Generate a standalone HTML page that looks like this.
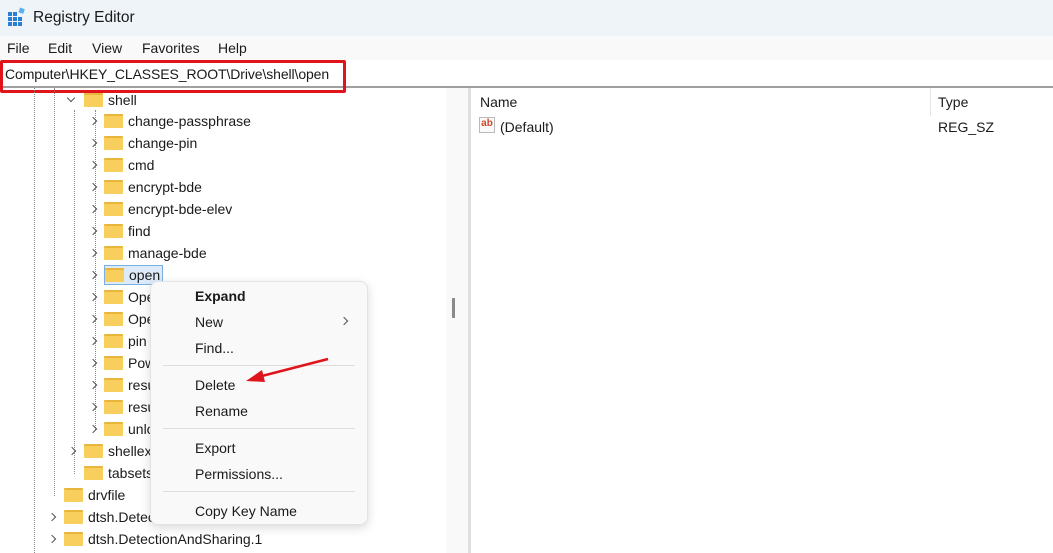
<!DOCTYPE html>
<html><head><style>
body{margin:0;width:1053px;height:553px;overflow:hidden;background:#fff;font-family:"Liberation Sans",sans-serif;font-size:14px;color:#1a1a1a;position:relative}
.a{position:absolute;white-space:nowrap}
.row{position:absolute;height:22px;line-height:22px;white-space:nowrap}
.fd{display:inline-block;width:19px;height:14px;background:#f8cf5c;border-radius:1px;vertical-align:-2px;margin-right:5px;position:relative;border-top:2px solid #e9b63c;box-sizing:border-box}
.ch{position:absolute;width:5px;height:5px;border-right:1.3px solid #555;border-bottom:1.3px solid #555;transform:rotate(-45deg)}
.dv{position:absolute;border-left:1px dotted #888}
.mi{position:absolute;left:44px;font-size:14px}
.sep{position:absolute;left:12px;right:12px;height:1px;background:#ddd}
</style></head><body>
<div class="a" style="left:0;top:0;width:1053px;height:36px;background:#eff4f9"></div>
<svg class="a" style="left:7px;top:7px" width="20" height="20" viewBox="0 0 20 20"><g fill="#2a7fd4"><rect x="1" y="5" width="4" height="4"/><rect x="6" y="5" width="4" height="4"/><rect x="1" y="10" width="4" height="4"/><rect x="6" y="10" width="4" height="4"/><rect x="11" y="10" width="4" height="4"/><rect x="1" y="15" width="4" height="4"/><rect x="6" y="15" width="4" height="4"/><rect x="11" y="15" width="4" height="4"/></g><rect x="12" y="1" width="5" height="5" fill="#5ab0ef" transform="rotate(20 14 4)"/></svg>
<div class="a" style="left:33px;top:9px;font-size:15.5px">Registry Editor</div>
<div class="a" style="left:0;top:36px;width:1053px;height:24px;background:#f9f9f9"></div>
<div class="a" style="left:7px;top:40px">File</div><div class="a" style="left:48px;top:40px">Edit</div><div class="a" style="left:92px;top:40px">View</div><div class="a" style="left:142px;top:40px">Favorites</div><div class="a" style="left:218px;top:40px">Help</div>
<div class="a" style="left:0;top:86px;width:1053px;height:2px;background:#a0a0a0"></div>
<div class="a" style="left:5px;top:66px;font-size:14px;letter-spacing:-0.1px">Computer\HKEY_CLASSES_ROOT\Drive\shell\open</div>
<div class="a" style="left:0;top:60px;width:340px;height:27px;border:3px solid #e0141b;border-radius:2px"></div>
<div class="a" style="left:446px;top:88px;width:22px;height:465px;background:#f9f9f9"></div>
<div class="a" style="left:452px;top:298px;width:3px;height:20px;background:#8a8a8a"></div>
<div class="a" style="left:468px;top:88px;width:3px;height:465px;background:#e0e0e0"></div>
<div class="a" style="left:480px;top:94px">Name</div>
<div class="a" style="left:930px;top:88px;width:1px;height:28px;background:#e5e5e5"></div>
<div class="a" style="left:938px;top:94px">Type</div>
<div class="a" style="left:479px;top:117px;width:16px;height:16px;border:1px solid #bbb;background:#fafafa;box-sizing:border-box;color:#d04a2a;font-size:10px;font-weight:bold;line-height:12px;text-align:center">ab</div>
<div class="a" style="left:500px;top:119px">(Default)</div>
<div class="a" style="left:938px;top:119px">REG_SZ</div>
<div class="dv" style="left:34px;top:88px;height:465px"></div>
<div class="dv" style="left:54px;top:88px;height:408px"></div>
<div class="dv" style="left:74px;top:110px;height:364px"></div>
<div class="dv" style="left:95px;top:110px;height:320px"></div>
<div class="row" style="left:66px;top:89px"><span class="ch" style="left:2px;top:6px;transform:rotate(45deg)"></span><span style="margin-left:18px"><span class="fd"></span>shell</span></div>
<div id="t"></div>
<script>
var items=["change-passphrase","change-pin","cmd","encrypt-bde","encrypt-bde-elev","find","manage-bde","open","OpenAsPortableDeviceFolder","OpenWithDialog","pin","PowerShell","resume","resume-elev","unlock"];
var h="";items.forEach(function(n,i){var y=110+i*22;h+='<div class="row" style="left:87px;top:'+y+'px"><span class="ch" style="left:3px;top:8px"></span><span style="margin-left:17px">'+(n=="open"?'<span style="border:1px solid #7ab0e0;background:#dceafa;padding:1px 2px 1px 0;"><span class="fd"></span>open</span>':'<span class="fd"></span>'+n)+'</span></div>';});
h+='<div class="row" style="left:66px;top:440px"><span class="ch" style="left:3px;top:8px"></span><span style="margin-left:18px"><span class="fd"></span>shellex</span></div>';
h+='<div class="row" style="left:66px;top:462px"><span style="margin-left:18px"><span class="fd"></span>tabsets</span></div>';
h+='<div class="row" style="left:46px;top:484px"><span style="margin-left:18px"><span class="fd"></span>drvfile</span></div>';
h+='<div class="row" style="left:46px;top:506px"><span class="ch" style="left:3px;top:8px"></span><span style="margin-left:18px"><span class="fd"></span>dtsh.DetectionAndSharing</span></div>';
h+='<div class="row" style="left:46px;top:528px"><span class="ch" style="left:3px;top:8px"></span><span style="margin-left:18px"><span class="fd"></span>dtsh.DetectionAndSharing.1</span></div>';
document.getElementById("t").innerHTML=h;
</script>
<div class="a" style="left:150px;top:281px;width:218px;height:244px;background:#f9f9f9;border:1px solid #e3e3e3;border-radius:8px;box-shadow:0 3px 10px rgba(0,0,0,.15);box-sizing:border-box">
<div class="mi" style="top:6px;font-weight:bold">Expand</div>
<div class="mi" style="top:32px">New</div>
<div class="ch" style="left:190px;top:36px"></div>
<div class="mi" style="top:58px">Find...</div>
<div class="sep" style="top:83px"></div>
<div class="mi" style="top:95px">Delete</div>
<div class="mi" style="top:121px">Rename</div>
<div class="sep" style="top:146px"></div>
<div class="mi" style="top:158px">Export</div>
<div class="mi" style="top:184px">Permissions...</div>
<div class="sep" style="top:209px"></div>
<div class="mi" style="top:221px">Copy Key Name</div>
</div>
<svg class="a" style="left:0;top:0" width="1053" height="553"><line x1="328" y1="359" x2="258" y2="377" stroke="#e0141b" stroke-width="2.5"/><polygon points="246,381 262,370 265,382" fill="#e0141b"/></svg>
</body></html>
